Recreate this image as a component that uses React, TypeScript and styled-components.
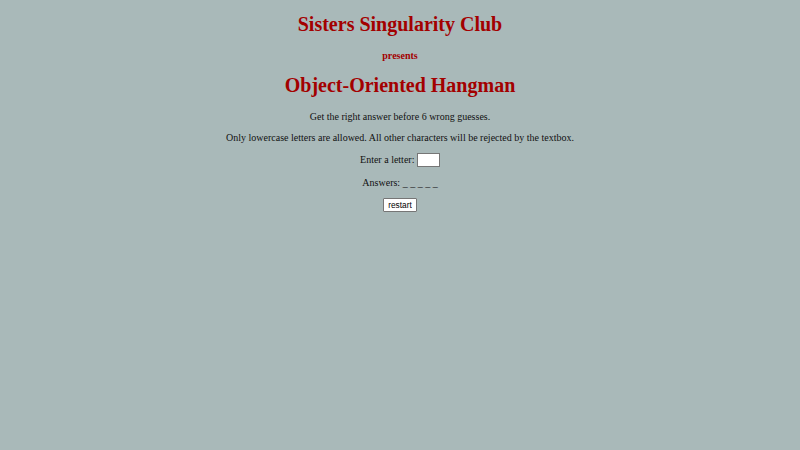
import React, { useState } from "react"
import styled, { createGlobalStyle } from "styled-components"

const GlobalStyle = createGlobalStyle`
  html, body {
    background: #a9b9b9;
  }
  body {
    margin: 0 5px;
    font-family: "Liberation Serif", "Times New Roman", serif;
    font-size: 10px;
    color: #111;
  }
`

const Page = styled.div`
  text-align: center;
`

const Title = styled.h1`
  font-size: 20px;
  font-weight: bold;
  color: #a30000;
  margin: 13.4px 0;
`

const Presents = styled.h4`
  font-size: 10px;
  font-weight: bold;
  color: #a30000;
  margin: 13.3px 0;
`

const Line = styled.p`
  margin: 10px 0;
`

const LetterInput = styled.input`
  width: 19px;
  height: 10px;
  padding: 1px;
  border: 1px solid #767676;
  background: #fff;
  font-size: 8px;
  vertical-align: baseline;
`

const Button = styled.button`
  font-family: "Liberation Sans", Arial, sans-serif;
  font-size: 8.3px;
  padding: 1px 4px;
  background: #fff;
  border: 1px solid #767676;
  border-radius: 1px;
  color: #000;
`

export default function App() {
  const [letter, setLetter] = useState("")
  const [answers, setAnswers] = useState("_ _ _ _ _")

  return (
    <Page>
      <GlobalStyle />
      <Title>Sisters Singularity Club</Title>
      <Presents>presents</Presents>
      <Title>Object-Oriented Hangman</Title>
      <Line>Get the right answer before 6 wrong guesses.</Line>
      <Line>
        Only lowercase letters are allowed. All other characters will be
        rejected by the textbox.
      </Line>
      <Line>
        Enter a letter:{" "}
        <LetterInput
          value={letter}
          maxLength={1}
          onChange={e => setLetter(e.target.value.replace(/[^a-z]/g, ""))}
        />
      </Line>
      <Line>Answers: {answers}</Line>
      <Line>
        <Button
          onClick={() => {
            setLetter("")
            setAnswers("_ _ _ _ _")
          }}
        >
          restart
        </Button>
      </Line>
    </Page>
  )
}
